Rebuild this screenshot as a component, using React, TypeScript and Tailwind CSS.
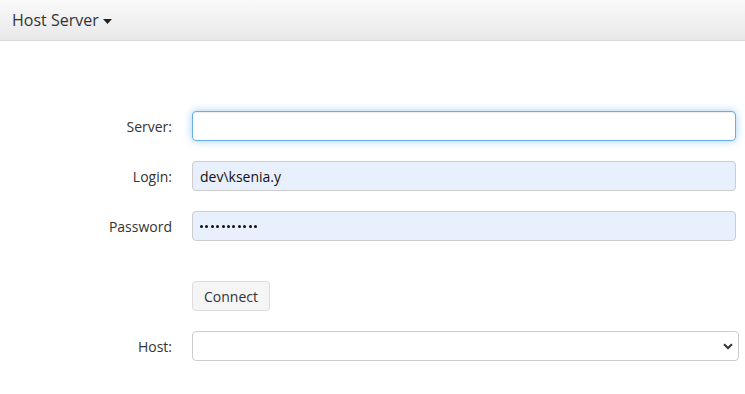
import React from "react";

export default function App() {
  const font = { fontFamily: '"Open Sans", "Noto Sans", sans-serif' };
  return (
    <div className="w-[745px] h-[394px] bg-white text-[#333]" style={font}>
      <div className="h-[41px] border-b border-[#d8d8d8] bg-gradient-to-b from-[#fafafa] to-[#e8e8e8] flex items-center pl-[12px]">
        <span className="text-[16px] text-[#333] leading-none">Host Server</span>
        <svg width="9" height="5" viewBox="0 0 9 5" className="ml-[4px] mt-[3px]">
          <path d="M0 0 L9 0 L4.5 5 Z" fill="#222" />
        </svg>
      </div>
      <div className="pt-[70px] flex flex-col">
        <div className="flex items-center h-[30px]">
          <label className="w-[172px] text-right text-[14px] text-[#333]">Server:</label>
          <div className="ml-[20px] w-[544px] h-[30px] rounded-[4px] border border-[#66afe9] bg-white shadow-[inset_0_1px_1px_rgba(0,0,0,0.075),0_0_8px_rgba(102,175,233,0.6)]"></div>
        </div>
        <div className="flex items-center h-[30px] mt-[20px]">
          <label className="w-[172px] text-right text-[14px] text-[#333]">Login:</label>
          <div className="ml-[20px] w-[544px] h-[30px] rounded-[4px] border border-[#ccc] bg-[#e8f0fe] flex items-center pl-[7px] text-[14px] text-[#111]">dev\ksenia.y</div>
        </div>
        <div className="flex items-center h-[30px] mt-[20px]">
          <label className="w-[172px] text-right text-[14px] text-[#333]">Password</label>
          <div className="ml-[20px] w-[544px] h-[30px] rounded-[4px] border border-[#ccc] bg-[#e8f0fe] flex items-center pl-[7px] gap-[2.4px]">
            {Array.from({ length: 11 }).map((_, i) => (
              <span key={i} className="w-[3px] h-[3px] rounded-full bg-[#111]" />
            ))}
          </div>
        </div>
        <div className="flex items-center h-[30px] mt-[40px]">
          <div className="w-[172px]" />
          <button className="ml-[20px] h-[30px] px-[11px] rounded-[4px] border border-[#ddd] bg-[#f5f5f5] text-[14px] text-[#333]">Connect</button>
        </div>
        <div className="flex items-center h-[30px] mt-[20px]">
          <label className="w-[172px] text-right text-[14px] text-[#333]">Host:</label>
          <div className="ml-[20px] w-[547px] h-[30px] rounded-[4px] border border-[#ccc] bg-white flex items-center justify-end pr-[5px]">
            <svg width="10" height="7" viewBox="0 0 10 7">
              <path d="M1 1.2 L5 5 L9 1.2" stroke="#333" strokeWidth="2" fill="none" />
            </svg>
          </div>
        </div>
      </div>
    </div>
  );
}
